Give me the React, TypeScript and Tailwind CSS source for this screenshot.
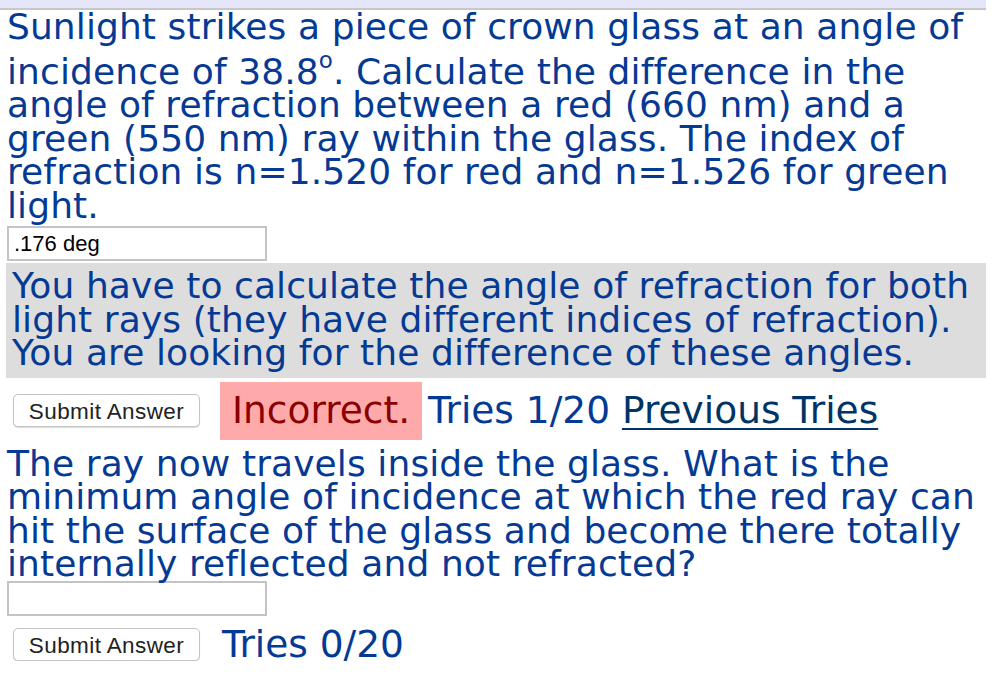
const Q_FONT = "font-['DejaVu_Sans',Verdana,sans-serif]";

const SubmitButton = () => (
  <button className="h-[33px] w-[187px] shrink-0 rounded-[5px] border border-[#c4c4c4] bg-white text-[22.5px] tracking-[0.4px] text-[#222] shadow-[0_1px_1px_rgba(0,0,0,0.15)] font-['Liberation_Sans',Arial,sans-serif]">
    Submit Answer
  </button>
);

const AnswerBox = ({ value }: { value: string }) => (
  <div className="ml-[7px] flex h-[35px] w-[260px] items-center border-2 border-[#c4c4c4] bg-white px-[5px] text-[22px] text-black font-['Liberation_Sans',Arial,sans-serif]">
    {value}
  </div>
);

export default function App() {
  return (
    <div className={`w-[994px] bg-white text-[#053a94] ${Q_FONT}`}>
      <div className="h-[10px] w-[986px] border-b-2 border-[#c8c8c8] bg-[#e6e6fa]" />

      <div className="w-[986px]">
        <p className="pl-[7px] pr-[4px] text-[36px] leading-[33.5px] tracking-[0.1px]">
          Sunlight strikes a piece of crown glass at an angle of incidence of 38.8
          <span className="align-[16px] text-[23px] leading-[33px]">o</span>. Calculate the
          difference in the angle of refraction between a red (660 nm) and a green (550 nm) ray
          within the glass. The index of refraction is n=1.520 for red and n=1.526 for green
          light.
        </p>

        <div className="mt-[4px]">
          <AnswerBox value=".176 deg" />
        </div>

        <div className="ml-[6px] mt-[2px] bg-[#dddddd] px-[6px] pb-[8px] pt-[6px] text-[36px] leading-[33.5px] tracking-[0.1px]">
          You have to calculate the angle of refraction for both light rays (they have different
          indices of refraction). You are looking for the difference of these angles.
        </div>

        <div className="mt-[4px] flex items-center pl-[13px] text-[37.5px]">
          <SubmitButton />
          <div className="ml-[20px] flex h-[58px] items-center bg-[#ffaaaa] px-[12px] text-[#8a0000]">
            Incorrect.
          </div>
          <div className="ml-[6px]">
            Tries 1/20{" "}
            <a href="#" className="text-[#003366] underline decoration-2 underline-offset-[5px]">
              Previous Tries
            </a>
          </div>
        </div>

        <p className="pl-[7px] pr-[4px] pt-[7px] text-[36px] leading-[33.5px] tracking-[0.1px]">
          The ray now travels inside the glass. What is the minimum angle of incidence at which
          the red ray can hit the surface of the glass and become there totally internally
          reflected and not refracted?
        </p>

        <div>
          <AnswerBox value="" />
        </div>

        <div className="mt-[12px] flex items-center pl-[13px]">
          <SubmitButton />
          <div className="ml-[22px] text-[37.5px] leading-[33.5px]">Tries 0/20</div>
        </div>
      </div>
    </div>
  );
}
